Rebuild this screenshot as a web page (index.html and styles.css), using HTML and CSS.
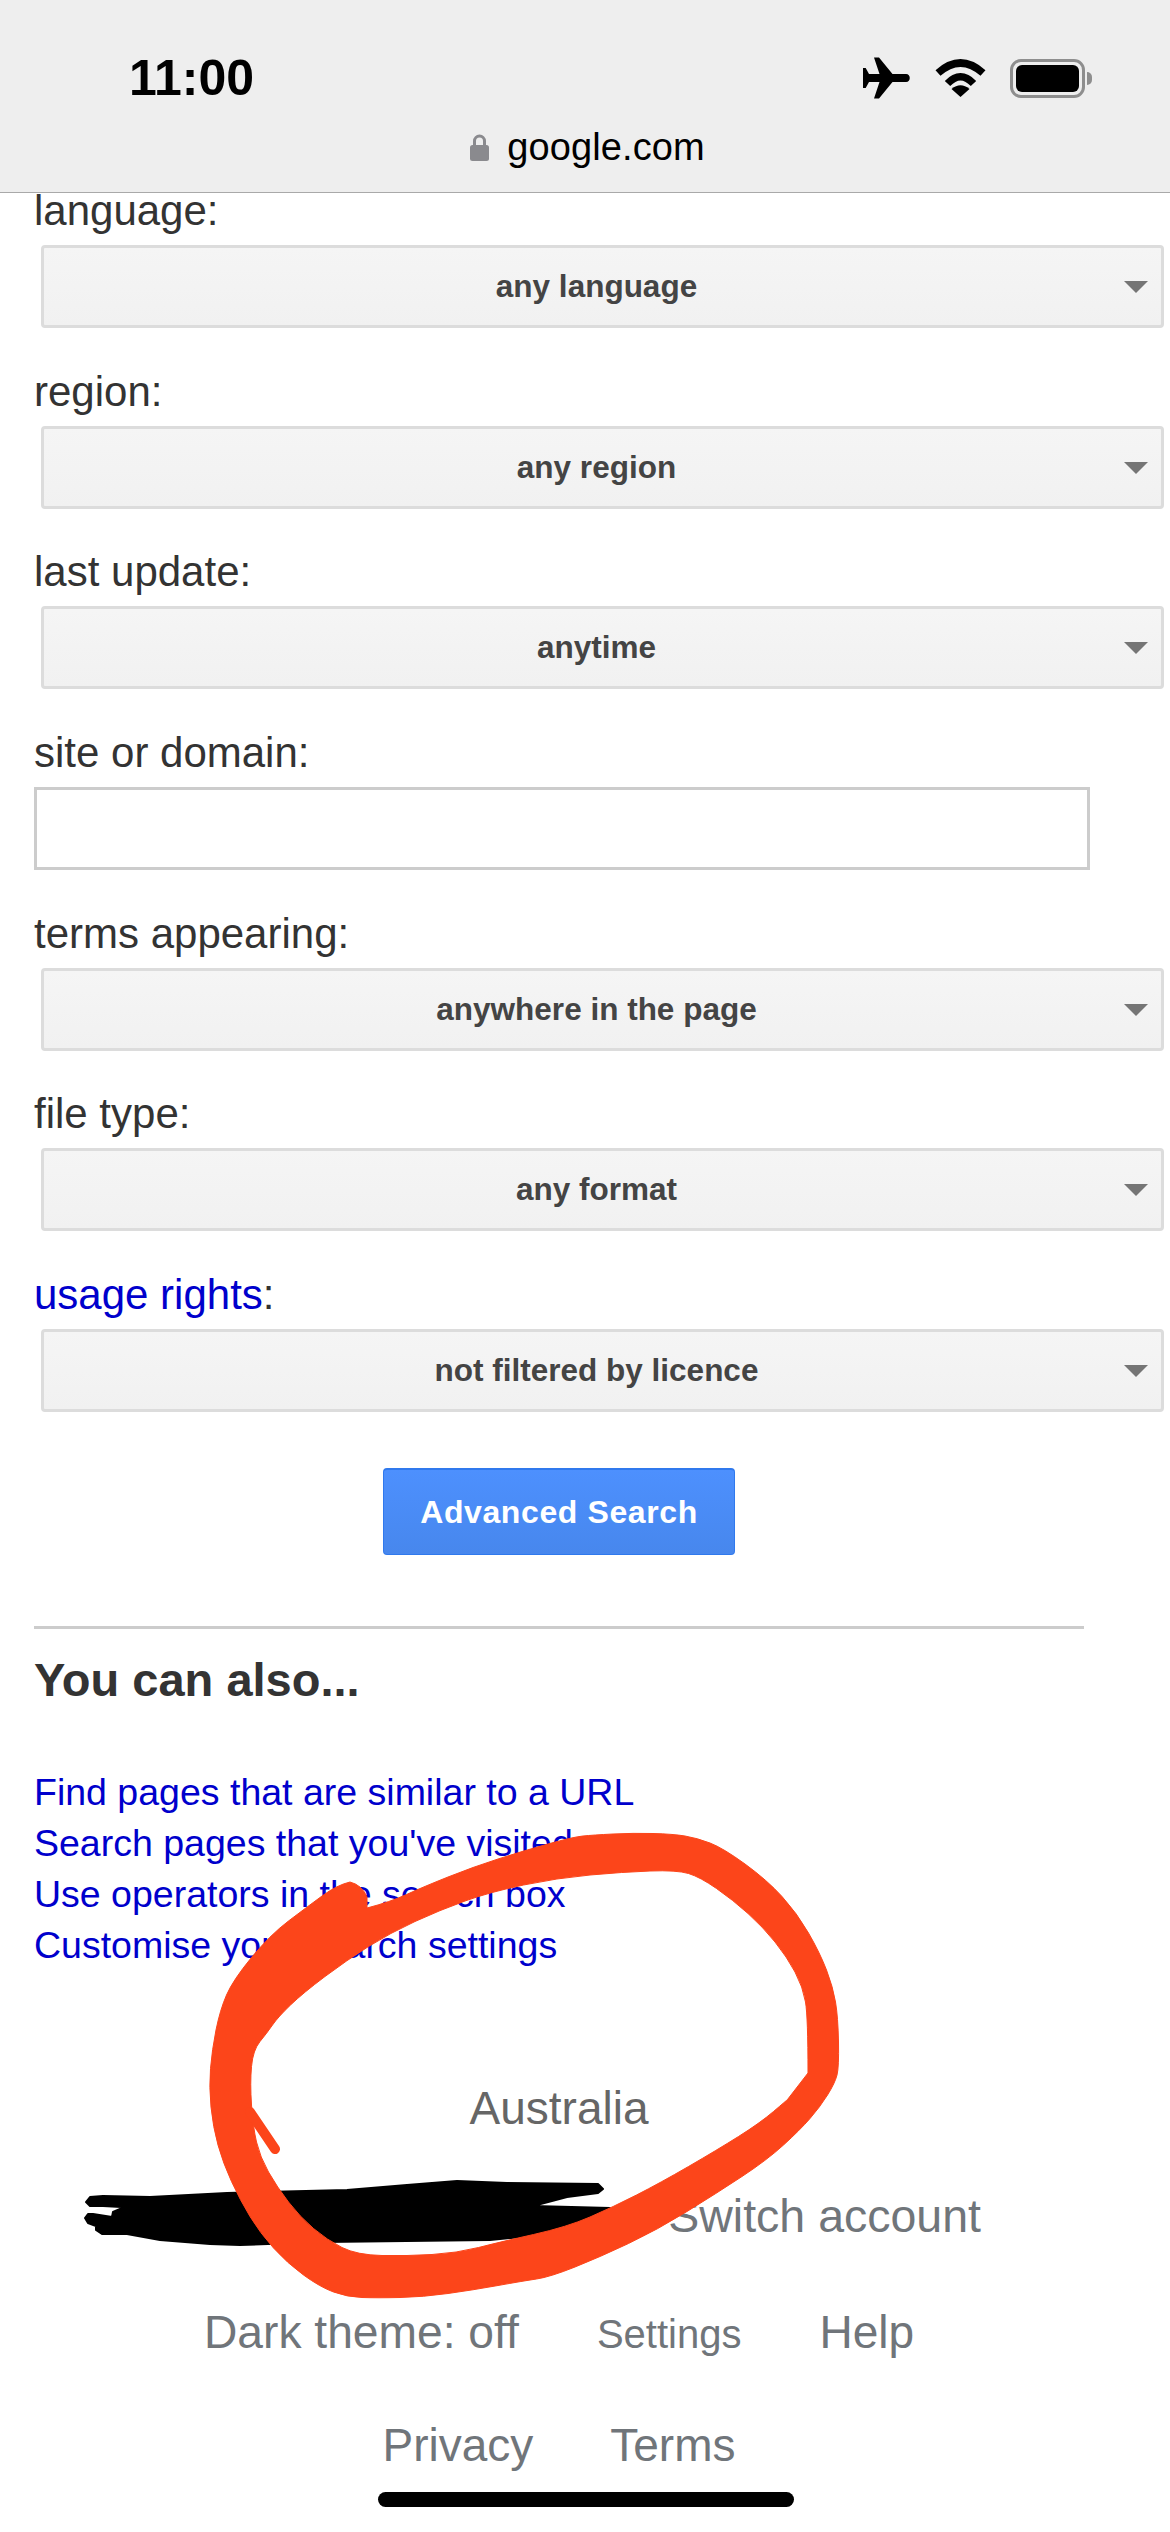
FILE: index.html
```html
<!DOCTYPE html>
<html lang="en">
<head>
<meta charset="utf-8">
<title>Advanced Search</title>
<link rel="stylesheet" href="styles.css">
</head>
<body>
<header class="browser">
  <div class="status">
    <span class="time">11:00</span>
    <div class="status-icons">
      <svg class="plane" viewBox="0 0 47 42"><path d="M11 0.5 L16 0.5 L29.5 17 L43 17 C48 17 48 25 43 25 L29.5 25 L16 41.5 L11 41.5 L16.5 25 L6 25 L2.7 31 L0 31 L0 11 L2.7 11 L6 17 L16.5 17 Z"/></svg>
      <svg class="wifi" viewBox="0 0 51 38"><path class="arc" d="M3 14 Q25.5 -6 48 14"/><path class="arc" d="M12.5 24.5 Q25.5 11 38.500 24.5"/><path d="M16.500 30 Q25.500 22.500 34.500 30 L25.500 38 Z"/></svg>
      <div class="battery"><div class="battery-body"><div class="battery-fill"></div></div><div class="battery-tip"></div></div>
    </div>
  </div>
  <div class="address">
    <svg class="lock" viewBox="0 0 19 27"><path class="shackle" d="M4.500 13 V7 a5 5 0 0 1 10 0 V13"/><rect y="11" width="19" height="16" rx="2.500"/></svg>
    <span class="domain">google.com</span>
  </div>
</header>

<main class="page">
  <div class="field"><label class="label">language:</label><div class="select">any language</div></div>
  <div class="field"><label class="label">region:</label><div class="select">any region</div></div>
  <div class="field"><label class="label">last update:</label><div class="select">anytime</div></div>
  <div class="field"><label class="label">site or domain:</label><div class="input"></div></div>
  <div class="field"><label class="label">terms appearing:</label><div class="select">anywhere in the page</div></div>
  <div class="field"><label class="label">file type:</label><div class="select">any format</div></div>
  <div class="field"><label class="label"><a class="link">usage rights</a>:</label><div class="select">not filtered by licence</div></div>

  <div class="actions"><button class="primary">Advanced Search</button></div>
  <hr class="rule">
  <h2 class="also">You can also...</h2>
  <ul class="links">
    <li><a class="link">Find pages that are similar to a URL</a></li>
    <li><a class="link">Search pages that you've visited</a></li>
    <li><a class="link">Use operators in the search box</a></li>
    <li><a class="link">Customise your search settings</a></li>
  </ul>

  <footer class="foot">
    <div class="foot-row country">Australia</div>
    <div class="foot-row account">Switch account</div>
    <div class="foot-row prefs"><span class="theme">Dark theme: off</span><span class="small">Settings</span><span>Help</span></div>
    <div class="foot-row legal"><span>Privacy</span><span>Terms</span></div>
  </footer>
</main>

<svg class="ink" viewBox="0 0 1170 2532">
  <path class="scribble" d="M86 2202 L90 2197 L103 2196 L150 2197 L227 2193 L347 2190 L407 2185 L457 2181 L507 2183 L598 2184 L603 2189 L598 2193 L567 2197 L533 2206 L610 2208 L613 2210 L543 2235 L490 2240 L323 2242 L240 2245 L210 2244 L160 2240 L127 2234 L102 2234 L96 2230 L96 2226 L88 2223 L85 2218 L88 2214 L93 2214 L112 2217 L113 2212 L120 2209 L140 2208 L103 2206 L90 2206 Z"/>
  <path class="loop" d="M367 1908 L367 1897 Q362 1885 350 1882 Q337 1885 322 1896 Q307 1907 288.5 1921 Q270 1935 251.5 1957.5 Q233 1980 226.5 1995 Q220 2010 216 2030 Q212 2050 210.5 2068.5 Q209 2087 211 2107 Q213 2127 218 2145 Q223 2163 231.5 2181.5 Q240 2200 250 2216.5 Q260 2233 273.5 2248 Q287 2263 303.5 2275 Q320 2287 333.5 2292 Q347 2297 362 2297.5 Q377 2298 400 2297.5 Q423 2297 448 2293.5 Q473 2290 498 2285.5 Q523 2281 536.5 2279 Q550 2277 575 2267 Q600 2257 628.5 2243.5 Q657 2230 687 2211.5 Q717 2193 742 2176.5 Q767 2160 783.5 2145 Q800 2130 810 2118.5 Q820 2107 827.5 2095 Q835 2083 837 2075 Q839 2067 838.5 2042 Q838 2017 835.5 2002 Q833 1987 826.5 1970 Q820 1953 808.5 1933 Q797 1913 782 1896.5 Q767 1880 745 1864 Q723 1848 710 1843 Q697 1838 685 1836 Q673 1834 653 1833.5 Q633 1833 613 1834 Q593 1835 583 1836 Q573 1837 548 1844 Q523 1851 498 1859 Q473 1867 448 1877 Q423 1887 406.5 1894.5 Q390 1902 367 1908 Z M808 2073 L787.5 2099.500 Q787 2100 773.5 2111.5 Q760 2123 738.5 2136.5 Q717 2150 688.5 2166.5 Q660 2183 636.5 2195 Q613 2207 590 2217 Q567 2227 533.5 2234.5 Q500 2242 478.5 2247.5 Q457 2253 432 2254.5 Q407 2256 382 2255.5 Q357 2255 342 2247.5 Q327 2240 313.5 2228.5 Q300 2217 288.5 2202 Q277 2187 268.5 2172 Q260 2157 256.5 2142 Q253 2127 251.5 2105 Q250 2083 251.5 2066.5 Q253 2050 260 2041.5 Q267 2033 272.5 2025 Q278 2017 290.5 2005 Q303 1993 325 1976.5 Q347 1960 368.5 1946.5 Q390 1933 415 1921.5 Q440 1910 465 1901 Q490 1892 523.5 1885 Q557 1878 590 1875 Q623 1872 650 1871 Q677 1870 688.5 1873.5 Q700 1877 716.5 1888.5 Q733 1900 748 1913.5 Q763 1927 775 1942 Q787 1957 795 1972 Q803 1987 805.5 2002 Q808 2017 808 2073 Z"/>
  <path class="flick" d="M250 2112 L275 2149"/>
</svg>
<div class="home-bar"></div>
</body>
</html>
```
FILE: styles.css
```css
* { box-sizing: border-box; }
html, body { margin: 0; padding: 0; }
body {
  width: 1170px;
  height: 2532px;
  overflow: hidden;
  position: relative;
  background: #fff;
  font-family: "Liberation Sans", Arial, sans-serif;
  color: #333;
}

.browser {
  height: 193px;
  background: #eee;
  border-bottom: 1px solid #a9a9a9;
  display: flex;
  flex-direction: column;
}
.status {
  display: flex;
  justify-content: space-between;
  align-items: center;
  height: 104px;
  padding: 52px 78px 0 129px;
  color: #000;
}
.time { font-size: 50px; font-weight: 700; line-height: 50px; }
.status-icons { display: flex; align-items: center; gap: 25px; }
.plane { width: 47px; height: 42px; fill: #000; }
.wifi { width: 51px; height: 38px; fill: #000; }
.wifi .arc { fill: none; stroke: #000; stroke-width: 7.5; }
.battery { display: flex; align-items: center; gap: 2px; margin-left: -1px; }
.battery-body {
  width: 75px; height: 39px;
  border: 3px solid #8e8e8e;
  border-radius: 11px;
  padding: 3px;
}
.battery-fill { width: 100%; height: 100%; background: #000; border-radius: 6px; }
.battery-tip { width: 5px; height: 13px; background: #8e8e8e; border-radius: 0 6px 6px 0; }

.address {
  display: flex;
  align-items: center;
  justify-content: center;
  gap: 18px;
  padding: 21px 0 0 0;
  margin-left: 5px;
}
.lock { width: 19px; height: 27px; fill: #8a8a8e; }
.lock .shackle { fill: none; stroke: #8a8a8e; stroke-width: 3; }
.domain { font-size: 38px; line-height: 44px; color: #000; letter-spacing: 0.1px; }

.page { width: 1050px; margin-left: 34px; }
.field { margin-bottom: 45.7px; }
.label { display: block; font-size: 42px; line-height: 36px; margin-bottom: 16px; color: #333; }
.link { color: #0000cc; }
.select {
  position: relative;
  width: 1123px;
  height: 83px;
  margin-left: 7px;
  border: 3px solid #dcdcdc;
  border-radius: 4px;
  background: linear-gradient(#f5f5f5, #f1f1f1);
  text-align: center;
  padding-right: 12px;
  font-size: 31.5px;
  font-weight: 700;
  line-height: 77px;
  color: #444;
}
.select::after {
  content: "";
  position: absolute;
  right: 13px;
  top: 33px;
  border-left: 12px solid transparent;
  border-right: 12px solid transparent;
  border-top: 12px solid #757575;
}
.input {
  width: 1056px;
  height: 83px;
  border: 3px solid #ccc;
  background: #fff;
}

.actions { display: flex; justify-content: center; padding-top: 10px; }
.primary {
  width: 352px;
  height: 87px;
  border: 1px solid #3079ed;
  border-top: 2px solid #3079ed;
  border-radius: 4px;
  background: linear-gradient(#4d90fe, #4787ed);
  color: #fff;
  font-family: inherit;
  font-size: 32px;
  font-weight: 700;
  letter-spacing: 0.6px;
  padding: 2px 0 0;
}
.rule { height: 3px; border: 0; background: #ccc; margin: 71px 0 0; }
.also { font-size: 47px; line-height: 54px; font-weight: 700; margin: 24px 0 0; color: #333; }
.links { list-style: none; margin: 60px 0 0; padding: 0; font-size: 37.5px; line-height: 51.2px; }

.foot { color: #70757a; font-size: 46px; }
.foot-row { display: flex; justify-content: center; line-height: 54px; }
.country { margin-top: 109px; color: #666; }
.account { margin-top: 54px; justify-content: flex-end; padding-right: 103px; font-size: 46.5px; }
.prefs { margin-top: 62px; gap: 78px; align-items: baseline; }
.theme { font-size: 46.2px; }
.small { font-size: 40px; }
.legal { margin-top: 57px; gap: 77px; }

.ink { position: absolute; left: 0; top: 0; width: 1170px; height: 2532px; pointer-events: none; }
.scribble { fill: #000; stroke: #000; stroke-width: 2; stroke-linejoin: round; }
.loop { fill: #fc451a; fill-rule: evenodd; stroke: #fc451a; stroke-width: 1; stroke-linejoin: round; }
.flick { fill: none; stroke: #fc451a; stroke-width: 10; stroke-linecap: round; }
.home-bar {
  position: absolute;
  left: 378px;
  top: 2492px;
  width: 416px;
  height: 15px;
  border-radius: 8px;
  background: #000;
}
```
